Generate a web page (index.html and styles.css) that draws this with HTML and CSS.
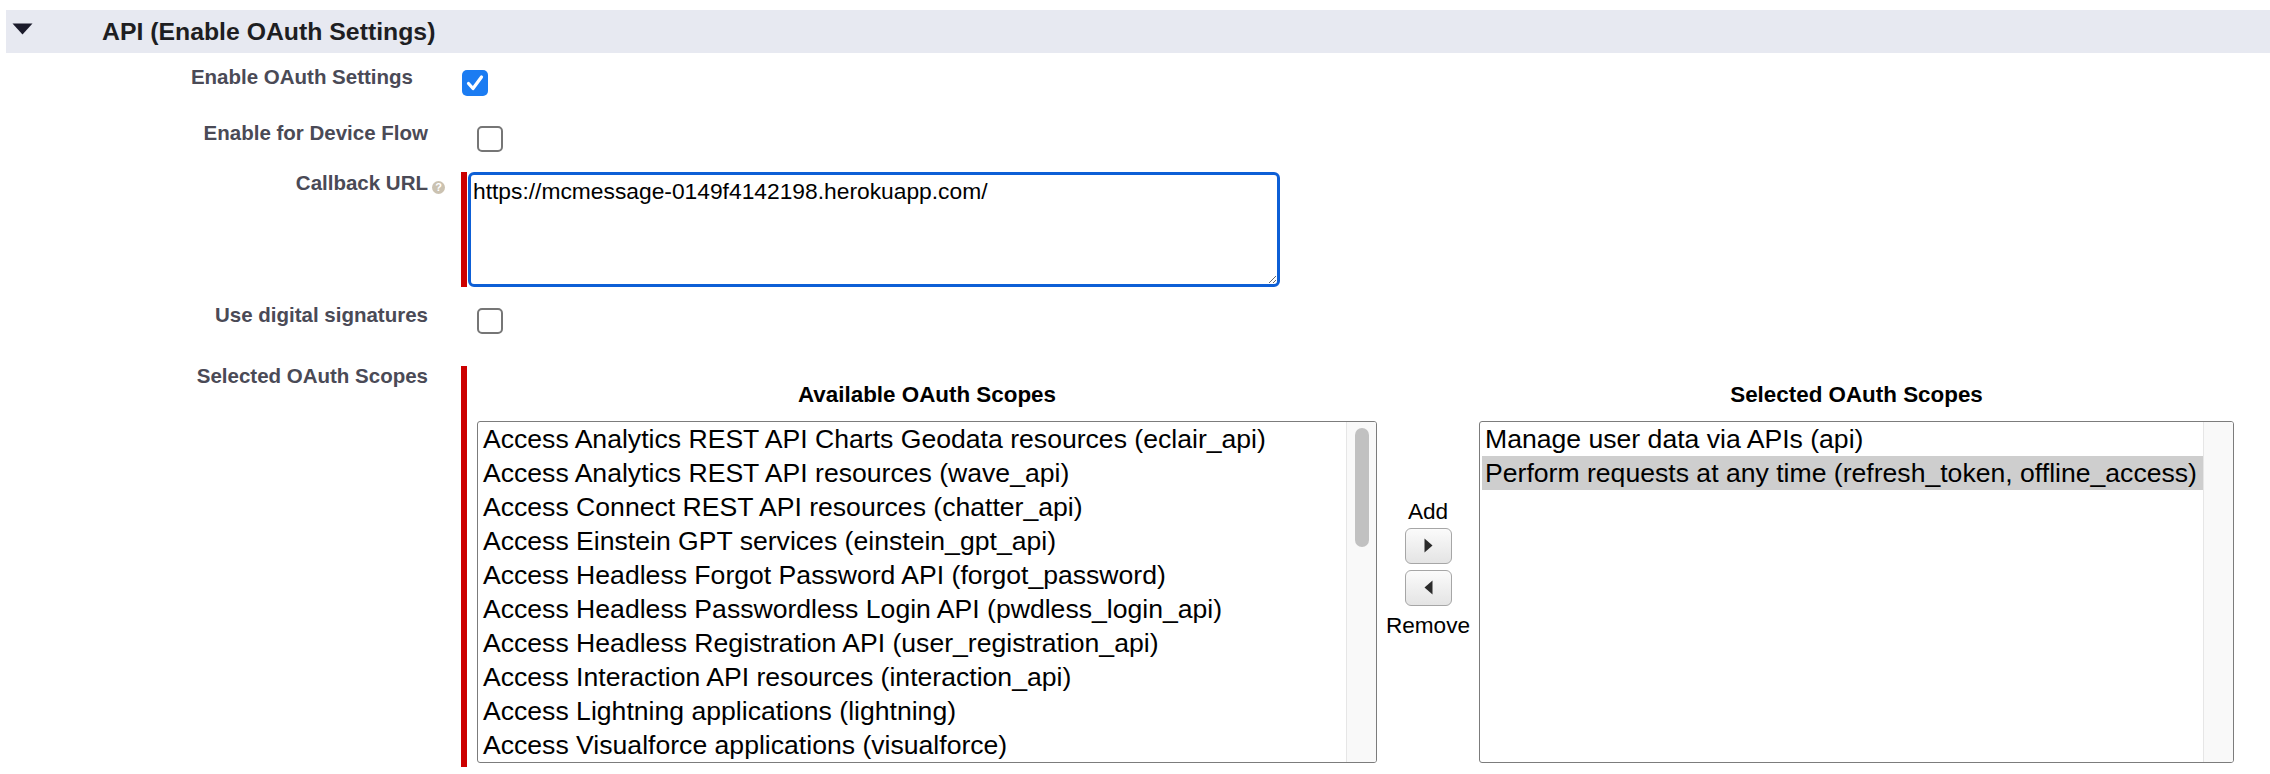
FILE: index.html
```html
<!DOCTYPE html>
<html lang="en">
<head>
<meta charset="utf-8">
<title>API (Enable OAuth Settings)</title>
<link rel="stylesheet" href="styles.css">
</head>
<body>
<div class="section-header">
  <svg class="twisty" width="21" height="12" viewBox="0 0 21 12"><path d="M0.5 0.5 H20.5 L10.5 11.5 Z" fill="#1b1b2b"/></svg>
  <h3 class="section-title">API (Enable OAuth Settings)</h3>
</div>

<div class="form">
  <div class="row row-oauth">
    <div class="label">Enable OAuth Settings</div>
    <div class="data data-check">
      <span class="checkbox checked"><svg width="26" height="26" viewBox="0 0 26 26"><path d="M6.5 13.5 L11 18.5 L19.5 7" fill="none" stroke="#fff" stroke-width="3.2" stroke-linecap="round" stroke-linejoin="round"/></svg></span>
    </div>
  </div>

  <div class="row row-device">
    <div class="label">Enable for Device Flow</div>
    <div class="data data-check"><span class="checkbox"></span></div>
  </div>

  <div class="row row-callback">
    <div class="label">Callback URL<span class="help">?</span></div>
    <div class="data data-callback">
      <div class="required">
        <textarea class="url-input" spellcheck="false">https://mcmessage-0149f4142198.herokuapp.com/</textarea>
      </div>
    </div>
  </div>

  <div class="row row-signatures">
    <div class="label">Use digital signatures</div>
    <div class="data data-check"><span class="checkbox"></span></div>
  </div>

  <div class="row row-scopes">
    <div class="label">Selected OAuth Scopes</div>
    <div class="data data-scopes">
      <div class="required required-scopes">
        <div class="duel">
          <div class="duel-title">Available OAuth Scopes</div>
          <div class="duel-buttons">
            <div class="duel-text">Add</div>
            <button class="arrow-btn" type="button" aria-label="Add"><svg width="9" height="15" viewBox="0 0 9 15"><path d="M0.5 0.5 L8.5 7.5 L0.5 14.5 Z" fill="#2b2b2b"/></svg></button>
            <button class="arrow-btn" type="button" aria-label="Remove"><svg width="9" height="15" viewBox="0 0 9 15"><path d="M8.5 0.5 L0.5 7.5 L8.5 14.5 Z" fill="#2b2b2b"/></svg></button>
            <div class="duel-text duel-text-remove">Remove</div>
          </div>
          <div class="duel-title">Selected OAuth Scopes</div>

          <div class="listbox listbox-available">
            <div class="options">
              <div class="option">Access Analytics REST API Charts Geodata resources (eclair_api)</div>
              <div class="option">Access Analytics REST API resources (wave_api)</div>
              <div class="option">Access Connect REST API resources (chatter_api)</div>
              <div class="option">Access Einstein GPT services (einstein_gpt_api)</div>
              <div class="option">Access Headless Forgot Password API (forgot_password)</div>
              <div class="option">Access Headless Passwordless Login API (pwdless_login_api)</div>
              <div class="option">Access Headless Registration API (user_registration_api)</div>
              <div class="option">Access Interaction API resources (interaction_api)</div>
              <div class="option">Access Lightning applications (lightning)</div>
              <div class="option">Access Visualforce applications (visualforce)</div>
            </div>
            <div class="scroll-track"><div class="scroll-thumb"></div></div>
          </div>

          <div class="listbox listbox-selected">
            <div class="options">
              <div class="option">Manage user data via APIs (api)</div>
              <div class="option option-selected">Perform requests at any time (refresh_token, offline_access)</div>
            </div>
            <div class="scroll-track"></div>
          </div>
        </div>
      </div>
    </div>
  </div>
</div>
</body>
</html>
```

FILE: styles.css
```css
* {
  box-sizing: border-box;
}

body {
  margin: 0;
  background: #ffffff;
  font-family: "Liberation Sans", Arial, Helvetica, sans-serif;
  color: #000000;
}

/* ---------- section header ---------- */
.section-header {
  display: flex;
  align-items: flex-start;
  margin: 10px 0 0 6px;
  height: 43px;
  padding-left: 6px;
  background: #e7e9f1;
}

.twisty {
  flex: none;
  margin-top: 13px;
  margin-right: 69px;
}

.section-title {
  margin: 0;
  padding-top: 8px;
  font-size: 24.8px;
  font-weight: bold;
  line-height: 28px;
  color: #1e1e22;
}

/* ---------- form rows ---------- */
.form {
  margin-top: 12px;
}

.row {
  display: flex;
  align-items: flex-start;
}

.label {
  flex: none;
  width: 428px;
  text-align: right;
  font-size: 20.5px;
  font-weight: bold;
  line-height: 23px;
  color: #4a4a56;
}

.data {
  margin-left: 33px;
}

.data-check {
  padding: 5px 0 0 16px;
}

.row-oauth {
  padding-bottom: 25px;
}

.row-oauth .label {
  width: 413px;
}

.row-device {
  padding-bottom: 19px;
}

.row-callback {
  padding-bottom: 16px;
}

.data-callback {
  padding-top: 1px;
}

.row-signatures {
  padding-bottom: 30px;
}

.data-scopes {
  padding-top: 2px;
}

/* help bubble */
.help {
  display: inline-block;
  width: 13px;
  height: 13px;
  margin-left: 4px;
  margin-right: -17px;
  border-radius: 50%;
  background: #cbc2b1;
  color: #ffffff;
  font-size: 11px;
  font-weight: bold;
  line-height: 13px;
  text-align: center;
  vertical-align: -1px;
}

/* checkboxes */
.checkbox {
  display: block;
  width: 26px;
  height: 26px;
  border: 2px solid #767676;
  border-radius: 5px;
  background: #ffffff;
}

.checkbox.checked {
  border: none;
  background: #1b7cf2;
}

.checkbox svg {
  display: block;
}

/* required indicator */
.required {
  display: flex;
  border-left: 6px solid #cc0000;
  padding-left: 1px;
}

.url-input {
  display: block;
  width: 812px;
  height: 115px;
  margin: 0;
  padding: 3px 2px;
  border: 3px solid #0d5fd6;
  border-radius: 6px;
  outline: none;
  font-family: "Liberation Sans", Arial, Helvetica, sans-serif;
  font-size: 22.8px;
  line-height: 26px;
  color: #000000;
  background: #ffffff;
}

/* ---------- duel listbox ---------- */
.required-scopes {
  padding: 16px 0 4px 10px;
}

.duel {
  display: grid;
  grid-template-columns: 900px 102px 755px;
  grid-template-rows: 39px 342px;
}

.duel-title {
  text-align: center;
  font-size: 22.4px;
  font-weight: bold;
  line-height: 26px;
  color: #000000;
}

.duel-buttons {
  grid-row: 1 / span 2;
  grid-column: 2;
  align-self: center;
  display: flex;
  flex-direction: column;
  align-items: center;
  padding-bottom: 8px;
}

.duel-text {
  font-size: 22.6px;
  line-height: 26px;
  margin-bottom: 3px;
}

.duel-text-remove {
  margin: 7px 0 0;
}

.arrow-btn {
  display: flex;
  align-items: center;
  justify-content: center;
  width: 47px;
  height: 36px;
  margin: 0;
  padding: 0;
  border: 1px solid #a6a6a6;
  border-radius: 6px;
  background: linear-gradient(#fbfbfb, #e4e4e4);
}

.arrow-btn + .arrow-btn {
  margin-top: 6px;
}

.listbox {
  display: flex;
  height: 342px;
  border: 1px solid #7c7c7c;
  border-radius: 3px;
  overflow: hidden;
  background: #ffffff;
}

.options {
  flex: 1;
  padding-left: 2px;
  overflow: hidden;
}

.option {
  height: 34px;
  padding-left: 3px;
  font-size: 26.6px;
  line-height: 34px;
  white-space: nowrap;
  color: #000000;
}

.option-selected {
  background: #cecece;
}

.scroll-track {
  flex: none;
  width: 30px;
  border-left: 1px solid #e6e6e6;
  background: #f9f9f9;
}

.scroll-thumb {
  width: 14px;
  height: 119px;
  margin: 6px 0 0 8px;
  border-radius: 7px;
  background: #c1c1c1;
}
```
